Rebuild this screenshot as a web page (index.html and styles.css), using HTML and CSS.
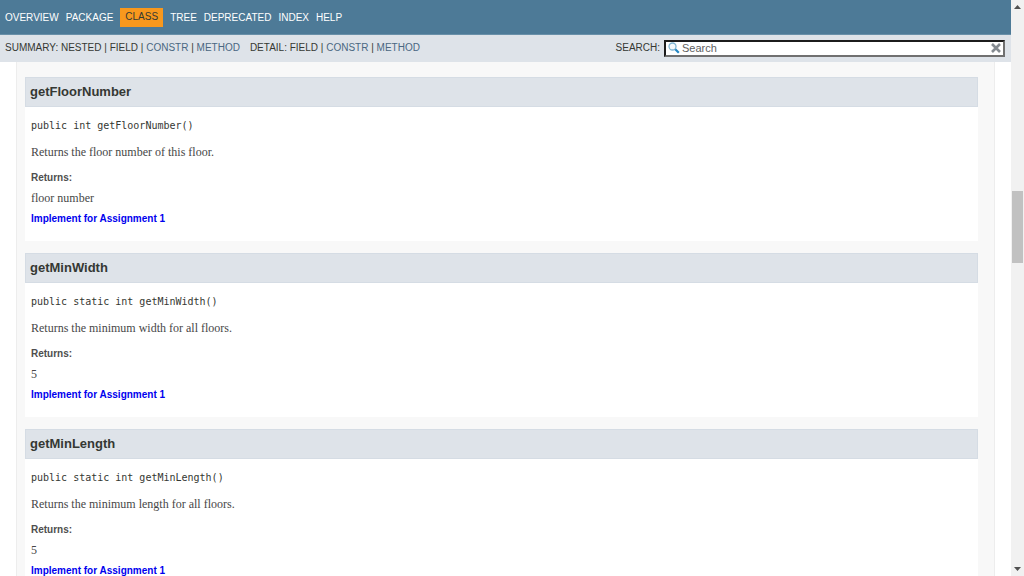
FILE: index.html
```
<!DOCTYPE html>
<html lang="en">
<head>
    <meta charset="UTF-8">
    <meta name="viewport" content="width=device-width, initial-scale=1.0">
    <title>Floor</title>
    <link rel="stylesheet" href="styles.css">
</head>
<body>
    <div class="page">
        <header>
            <nav class="top-nav">
                <a href="#">OVERVIEW</a>
                <a href="#">PACKAGE</a>
                <span class="active">CLASS</span>
                <a href="#">TREE</a>
                <a href="#">DEPRECATED</a>
                <a href="#">INDEX</a>
                <a href="#">HELP</a>
            </nav>
            <div class="sub-nav">
                <div class="sub-list">SUMMARY: NESTED | FIELD | <a href="#">CONSTR</a> | <a href="#">METHOD</a></div>
                <div class="sub-list">DETAIL: FIELD | <a href="#">CONSTR</a> | <a href="#">METHOD</a></div>
                <form class="search">
                    <label for="search-input">SEARCH:</label>
                    <div class="search-box">
                        <svg width="12" height="12" viewBox="0 0 12 12">
                            <circle cx="4.5" cy="4.5" r="3.5" fill="#f4fafd" stroke="#7fb5d3" stroke-width="1.3"/>
                            <path d="M7.3 7.3L10.8 10.8" stroke="#2487c4" stroke-width="2.2"/>
                        </svg>
                        <input type="text" id="search-input" placeholder="Search">
                        <button type="reset" aria-label="Clear">
                            <svg width="10" height="10" viewBox="0 0 10 10">
                                <path d="M1 1L9 9M9 1L1 9" stroke="#858b91" stroke-width="2.6"/>
                            </svg>
                        </button>
                    </div>
                </form>
            </div>
        </header>
        <main>
            <section class="detail">
                <h3>getFloorNumber</h3>
                <div class="block">
                    <pre>public int getFloorNumber()</pre>
                    <p>Returns the floor number of this floor.</p>
                    <dl>
                        <dt>Returns:</dt>
                        <dd>floor number</dd>
                    </dl>
                    <div class="task">Implement for Assignment 1</div>
                </div>
            </section>
            <section class="detail">
                <h3>getMinWidth</h3>
                <div class="block">
                    <pre>public static int getMinWidth()</pre>
                    <p>Returns the minimum width for all floors.</p>
                    <dl>
                        <dt>Returns:</dt>
                        <dd>5</dd>
                    </dl>
                    <div class="task">Implement for Assignment 1</div>
                </div>
            </section>
            <section class="detail">
                <h3>getMinLength</h3>
                <div class="block">
                    <pre>public static int getMinLength()</pre>
                    <p>Returns the minimum length for all floors.</p>
                    <dl>
                        <dt>Returns:</dt>
                        <dd>5</dd>
                    </dl>
                    <div class="task">Implement for Assignment 1</div>
                </div>
            </section>
        </main>
    </div>
    <div class="scrollbar">
        <svg width="7" height="4" viewBox="0 0 7 4"><path d="M0 4L3.5 0L7 4Z" fill="#505050"/></svg>
        <div class="track"><div class="thumb"></div></div>
        <svg width="7" height="4" viewBox="0 0 7 4"><path d="M0 0L3.5 4L7 0Z" fill="#505050"/></svg>
    </div>
</body>
</html>
```
FILE: styles.css
```
* {
    box-sizing: border-box;
    margin: 0;
    padding: 0;
}
body {
    display: flex;
    height: 100vh;
    overflow: hidden;
    background-color: #fff;
    color: #353833;
    font-family: "Liberation Sans", Arial, sans-serif;
    font-size: 10px;
    line-height: 16px;
}
a {
    color: #4a6782;
    text-decoration: none;
}
.page {
    flex: 1;
    min-width: 0;
    display: flex;
    flex-direction: column;
}
header {
    flex-shrink: 0;
}
.top-nav {
    display: flex;
    align-items: center;
    gap: 7px;
    height: 35px;
    padding: 1px 5px 0;
    background-color: #4d7a97;
    border-bottom: 1px solid #6990a9;
}
.top-nav a {
    color: #fff;
}
.top-nav .active {
    padding: 1px 5px 2px;
    background-color: #f8981d;
}
.sub-nav {
    display: flex;
    align-items: center;
    gap: 10px;
    height: 27px;
    padding: 0 6px 1px 5px;
    background-color: #dee3e9;
}
.search {
    display: flex;
    align-items: center;
    gap: 4px;
    margin-left: auto;
}
.search-box {
    display: flex;
    align-items: center;
    width: 341px;
    height: 17px;
    padding: 0 2px;
    border: 2px solid;
    border-color: #1c1c1c #707070 #707070 #1c1c1c;
    background-color: #fff;
}
.search-box input {
    flex: 1;
    min-width: 0;
    height: 13px;
    padding-left: 2px;
    border: none;
    outline: none;
    background: none;
    font-family: inherit;
    font-size: 11px;
}
.search-box input::placeholder {
    color: #606060;
}
.search-box button {
    display: flex;
    border: none;
    background: none;
}
main {
    flex: 1;
    min-height: 0;
    overflow: hidden;
    margin: 0 16px;
    padding: 15px 16px 0 8px;
    background-color: #f8f8f8;
    border: 1px solid #ededed;
    border-width: 0 1px;
}
.detail {
    margin-bottom: 12px;
    background-color: #fff;
}
h3 {
    height: 30px;
    padding-left: 4px;
    border: 1px solid #d5dce4;
    background-color: #dee3e9;
    font-size: 13px;
    line-height: 28px;
}
.block {
    padding: 11px 6px 14px;
}
pre {
    margin-bottom: 10px;
    font-family: "DejaVu Sans Mono", monospace;
    font-size: 10px;
}
p, dd {
    color: #474747;
    font-family: "Liberation Serif", serif;
    font-size: 12px;
}
p {
    margin-bottom: 10px;
}
dt {
    margin-bottom: 4px;
    color: #4e4e4e;
    font-weight: bold;
}
dd {
    margin-bottom: 5px;
}
.task {
    color: #0000ee;
    font-weight: bold;
}
.scrollbar {
    display: flex;
    flex-direction: column;
    align-items: center;
    width: 13px;
    padding: 5px 1px;
    background-color: #f1f1f1;
}
.track {
    flex: 1;
    width: 100%;
    padding-top: 182px;
}
.thumb {
    height: 72px;
    background-color: #c1c1c1;
}
```
